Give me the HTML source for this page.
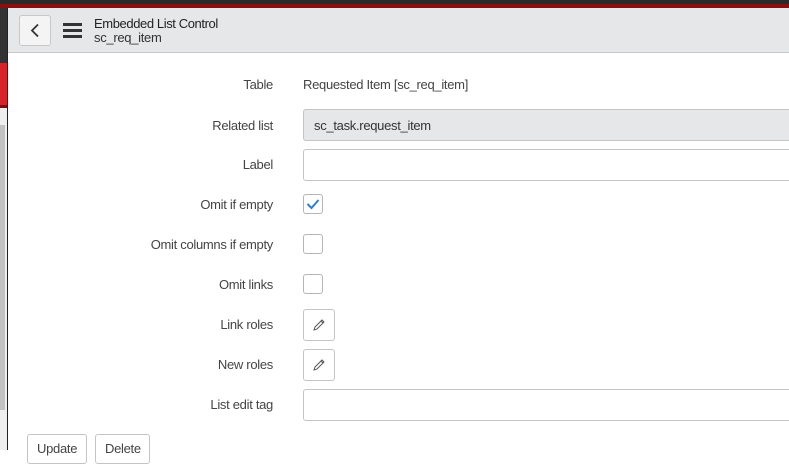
<!DOCTYPE html>
<html><head><meta charset="utf-8"><style>
*{box-sizing:border-box;margin:0;padding:0}
body{width:789px;height:450px;overflow:hidden;position:relative;background:#fff;font-family:"Liberation Sans",sans-serif;color:#333}
.a{position:absolute}
.lbl{position:absolute;right:516px;font-size:13px;color:#444;text-align:right;white-space:nowrap;letter-spacing:-0.3px}
.inp{position:absolute;left:303px;width:500px;height:32px;border:1px solid #c4c4c4;border-radius:3px;background:#fff}
.cb{position:absolute;left:303px;width:20px;height:20px;border:1px solid #b5b5b5;border-radius:3px;background:#fff}
.pb{position:absolute;left:303px;width:32px;height:32px;border:1px solid #c4c4c4;border-radius:3px;background:#fff}
.btn{position:absolute;top:434px;height:30px;border:1px solid #c4c4c4;border-radius:3px;background:#fff;font-size:13px;color:#444;padding:6px 9px;letter-spacing:-0.3px}
</style></head><body>
<div class="a" style="left:0;top:0;width:789px;height:4px;background:#2a2a2a"></div>
<div class="a" style="left:0;top:4px;width:789px;height:4px;background:#8a1010"></div>
<div class="a" style="left:0;top:8px;width:7px;height:55px;background:#333"></div>
<div class="a" style="left:0;top:63px;width:7px;height:42px;background:#d8232a"></div>
<div class="a" style="left:0;top:105px;width:7px;height:3px;background:#7a1010"></div>
<div class="a" style="left:0;top:108px;width:7px;height:342px;background:#eee"></div>
<div class="a" style="left:0;top:125px;width:5px;height:285px;background:#c2c2c2"></div>
<div class="a" style="left:7px;top:8px;width:1px;height:442px;background:#222"></div>
<div class="a" style="left:8px;top:8px;width:781px;height:45px;background:#e6e7e8;border-bottom:1px solid #c8c8c8"></div>
<div class="a" style="left:19px;top:15px;width:32px;height:31px;border:1px solid #c8c8c8;border-radius:3px;background:#f4f4f4">
<svg width="30" height="29" viewBox="0 0 30 29"><path d="M18 8.5 L12 14.5 L18 20.5" fill="none" stroke="#333" stroke-width="1.8"/></svg></div>
<div class="a" style="left:63px;top:23px;width:19px;height:3px;background:#333"></div>
<div class="a" style="left:63px;top:29px;width:19px;height:3px;background:#333"></div>
<div class="a" style="left:63px;top:35px;width:19px;height:3px;background:#333"></div>
<div class="a" style="left:94px;top:16px;font-size:13px;color:#222;letter-spacing:-0.4px">Embedded List Control</div>
<div class="a" style="left:94px;top:30px;font-size:13px;color:#333;letter-spacing:-0.3px">sc_req_item</div>

<div class="lbl" style="top:77px">Table</div>
<div class="a" style="left:303px;top:77px;font-size:13px;color:#444;letter-spacing:-0.3px">Requested Item [sc_req_item]</div>
<div class="lbl" style="top:118px">Related list</div>
<div class="inp" style="top:109px;background:#e6e7e8;font-size:13px;padding:8px 10px;color:#333;letter-spacing:-0.3px">sc_task.request_item</div>
<div class="lbl" style="top:157px">Label</div>
<div class="inp" style="top:149px"></div>
<div class="lbl" style="top:197px">Omit if empty</div>
<div class="cb" style="top:194px"><svg width="18" height="18" viewBox="0 0 18 18"><path d="M3.5 9 L7.5 13 L14.5 5" fill="none" stroke="#2f7fd0" stroke-width="2"/></svg></div>
<div class="lbl" style="top:237px">Omit columns if empty</div>
<div class="cb" style="top:234px"></div>
<div class="lbl" style="top:277px">Omit links</div>
<div class="cb" style="top:274px"></div>
<div class="lbl" style="top:317px">Link roles</div>
<div class="pb" style="top:309px"><svg width="30" height="30" viewBox="0 0 30 30"><path d="M10 20 L11 17 L18 10 L20 12 L13 19 Z M17 11 L19 13" fill="none" stroke="#555" stroke-width="1"/></svg></div>
<div class="lbl" style="top:357px">New roles</div>
<div class="pb" style="top:349px"><svg width="30" height="30" viewBox="0 0 30 30"><path d="M10 20 L11 17 L18 10 L20 12 L13 19 Z M17 11 L19 13" fill="none" stroke="#555" stroke-width="1"/></svg></div>
<div class="lbl" style="top:397px">List edit tag</div>
<div class="inp" style="top:389px"></div>
<div class="btn" style="left:27px;width:60px">Update</div>
<div class="btn" style="left:95px;width:55px">Delete</div>
</body></html>
